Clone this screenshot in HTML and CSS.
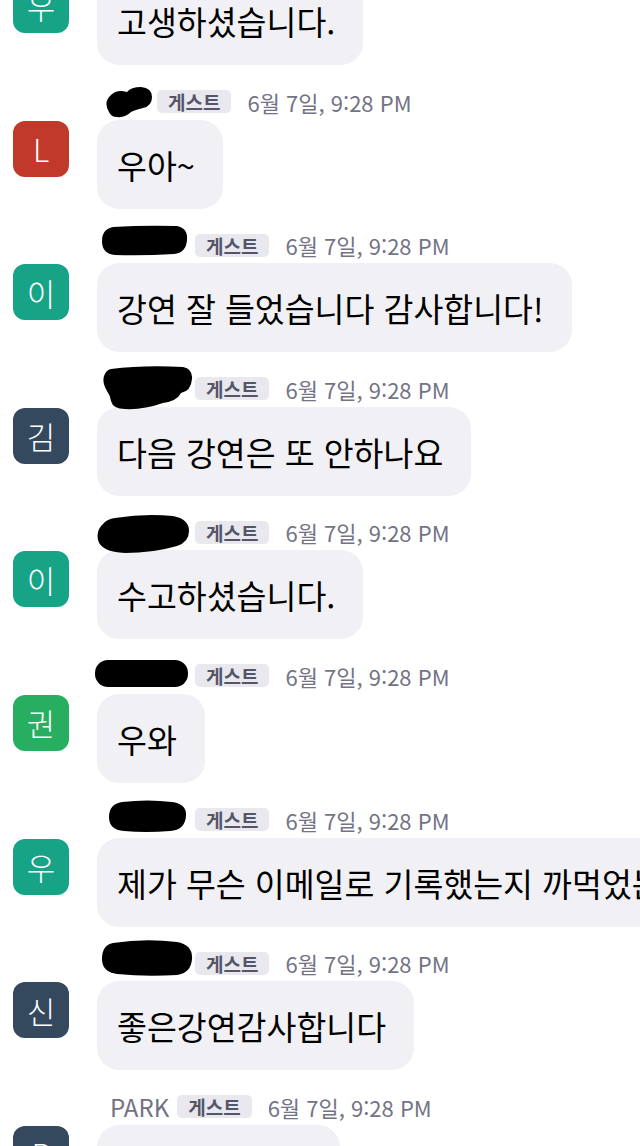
FILE: index.html
```html
<!DOCTYPE html>
<html lang="ko">
<head>
    <meta charset="UTF-8">
    <meta name="viewport" content="width=device-width, initial-scale=1.0">
    <title>채팅</title>
    <link rel="stylesheet" href="styles.css">
</head>
<body>
    <div class="chat">
        <div class="msg">
            <div class="msg-head">
                <span class="name name-m">우</span>
                <span class="badge">게스트</span>
                <span class="time">6월 7일, 9:28 PM</span>
            </div>
            <div class="msg-body">
                <div class="avatar teal">우</div>
                <div class="bubble">고생하셨습니다.</div>
            </div>
        </div>

        <div class="msg">
            <div class="msg-head">
                <span class="name name-s">
                    <svg class="blob blob-2" viewBox="0 0 48 32"><path d="M4 26 Q-2 16 6 9 Q12 3 22 6 Q26 1 36 1 Q47 2 47 11 Q47 20 38 22 Q30 24 26 26 Q20 32 12 31 Q6 31 4 26Z"/></svg>
                </span>
                <span class="badge">게스트</span>
                <span class="time">6월 7일, 9:28 PM</span>
            </div>
            <div class="msg-body">
                <div class="avatar red">L</div>
                <div class="bubble">우아~</div>
            </div>
        </div>

        <div class="msg">
            <div class="msg-head">
                <span class="name name-m">
                    <svg class="blob blob-3" viewBox="0 0 87 32"><path d="M12 2 Q44 0 76 1 Q87 3 86 15 Q85 28 73 29 Q42 31 14 30 Q1 29 1 16 Q1 4 12 2Z"/></svg>
                </span>
                <span class="badge">게스트</span>
                <span class="time">6월 7일, 9:28 PM</span>
            </div>
            <div class="msg-body">
                <div class="avatar teal">이</div>
                <div class="bubble">강연 잘 들었습니다 감사합니다!</div>
            </div>
        </div>

        <div class="msg">
            <div class="msg-head">
                <span class="name name-m">
                    <svg class="blob blob-4" viewBox="0 0 90 46"><path d="M8 4 Q40 0 80 2 Q90 4 89 14 Q88 26 78 28 Q74 36 60 38 Q40 45 22 44 Q10 44 8 36 Q7 30 4 26 Q-1 18 1 11 Q3 5 8 4Z"/></svg>
                </span>
                <span class="badge">게스트</span>
                <span class="time">6월 7일, 9:28 PM</span>
            </div>
            <div class="msg-body">
                <div class="avatar slate">김</div>
                <div class="bubble">다음 강연은 또 안하나요</div>
            </div>
        </div>

        <div class="msg">
            <div class="msg-head">
                <span class="name name-m">
                    <svg class="blob blob-5" viewBox="0 0 93 40"><path d="M18 4 Q48 -1 76 2 Q92 5 92 17 Q92 28 80 32 Q56 39 28 39 Q4 38 1 26 Q-1 16 6 10 Q10 5 18 4Z"/></svg>
                </span>
                <span class="badge">게스트</span>
                <span class="time">6월 7일, 9:28 PM</span>
            </div>
            <div class="msg-body">
                <div class="avatar teal">이</div>
                <div class="bubble">수고하셨습니다.</div>
            </div>
        </div>

        <div class="msg">
            <div class="msg-head">
                <span class="name name-m">
                    <svg class="blob blob-6" viewBox="0 0 93 27"><rect x="0" y="0" width="93" height="27" rx="13"/></svg>
                </span>
                <span class="badge">게스트</span>
                <span class="time">6월 7일, 9:28 PM</span>
            </div>
            <div class="msg-body">
                <div class="avatar green">권</div>
                <div class="bubble">우와</div>
            </div>
        </div>

        <div class="msg">
            <div class="msg-head">
                <span class="name name-m">
                    <svg class="blob blob-7" viewBox="0 0 79 33"><path d="M14 2 Q40 -1 64 2 Q79 4 78 16 Q77 30 62 31 Q38 33 16 31 Q1 30 1 17 Q1 4 14 2Z"/></svg>
                </span>
                <span class="badge">게스트</span>
                <span class="time">6월 7일, 9:28 PM</span>
            </div>
            <div class="msg-body">
                <div class="avatar teal">우</div>
                <div class="bubble">제가 무슨 이메일로 기록했는지 까먹었는데요</div>
            </div>
        </div>

        <div class="msg">
            <div class="msg-head">
                <span class="name name-m">
                    <svg class="blob blob-8" viewBox="0 0 92 37"><path d="M12 4 Q44 -1 76 3 Q92 6 91 20 Q90 34 76 36 Q44 38 16 35 Q1 33 1 20 Q1 6 12 4Z"/></svg>
                </span>
                <span class="badge">게스트</span>
                <span class="time">6월 7일, 9:28 PM</span>
            </div>
            <div class="msg-body">
                <div class="avatar slate">신</div>
                <div class="bubble">좋은강연감사합니다</div>
            </div>
        </div>

        <div class="msg">
            <div class="msg-head">
                <span class="name">PARK</span>
                <span class="badge">게스트</span>
                <span class="time">6월 7일, 9:28 PM</span>
            </div>
            <div class="msg-body">
                <div class="avatar slate">P</div>
                <div class="bubble">감사합니다 ^^</div>
            </div>
        </div>
    </div>
</body>
</html>
```

FILE: styles.css
```css
body {
    margin: 0;
    padding: 0;
    background-color: #ffffff;
    font-family: "Noto Sans CJK KR", "Noto Sans", sans-serif;
    overflow: hidden;
}
.chat {
    margin-top: -56px;
}
.msg {
    margin-bottom: 22.6px;
}
.msg-head {
    display: flex;
    align-items: center;
    height: 28px;
    padding-left: 110px;
    margin-bottom: 4px;
    white-space: nowrap;
}
.name {
    position: relative;
    display: inline-block;
    font-size: 24px;
    color: #727284;
    line-height: 28px;
    margin-right: 8px;
}
.name-s {
    width: 39px;
    height: 28px;
}
.name-m {
    width: 77px;
    height: 28px;
}
.blob {
    position: absolute;
    fill: #000;
}
.blob-2 { left: -5px; top: -2px; width: 48px; height: 32px; }
.blob-3 { left: -9px; top: -6px; width: 87px; height: 32px; }
.blob-4 { left: -7px; top: -10px; width: 90px; height: 46px; }
.blob-5 { left: -13px; top: -4px; width: 93px; height: 40px; }
.blob-6 { left: -15px; top: -2px; width: 93px; height: 27px; }
.blob-7 { left: -2px; top: -6px; width: 79px; height: 33px; }
.blob-8 { left: -9px; top: -10px; width: 92px; height: 37px; }
.badge {
    display: inline-block;
    background-color: #e8e8ee;
    color: #55556a;
    font-weight: bold;
    font-size: 19px;
    line-height: 23px;
    padding: 0 11px;
    border-radius: 5px;
    margin-right: 16px;
}
.time {
    font-size: 22px;
    color: #737386;
}
.msg-body {
    display: flex;
    align-items: flex-start;
    gap: 28px;
    padding-left: 13px;
}
.avatar {
    flex: none;
    width: 56px;
    height: 56px;
    margin-top: 1px;
    border-radius: 12px;
    color: #ffffff;
    font-size: 31px;
    font-weight: 300;
    display: flex;
    align-items: center;
    justify-content: center;
}
.teal { background-color: #17a386; }
.red { background-color: #c0392b; }
.slate { background-color: #34495e; }
.green { background-color: #27ae60; }
.bubble {
    flex: none;
    background-color: #f1f1f5;
    border-radius: 22px;
    padding: 22px 28px 22px 20px;
    font-size: 32.5px;
    line-height: 45px;
    color: #000;
    white-space: nowrap;
}
```
